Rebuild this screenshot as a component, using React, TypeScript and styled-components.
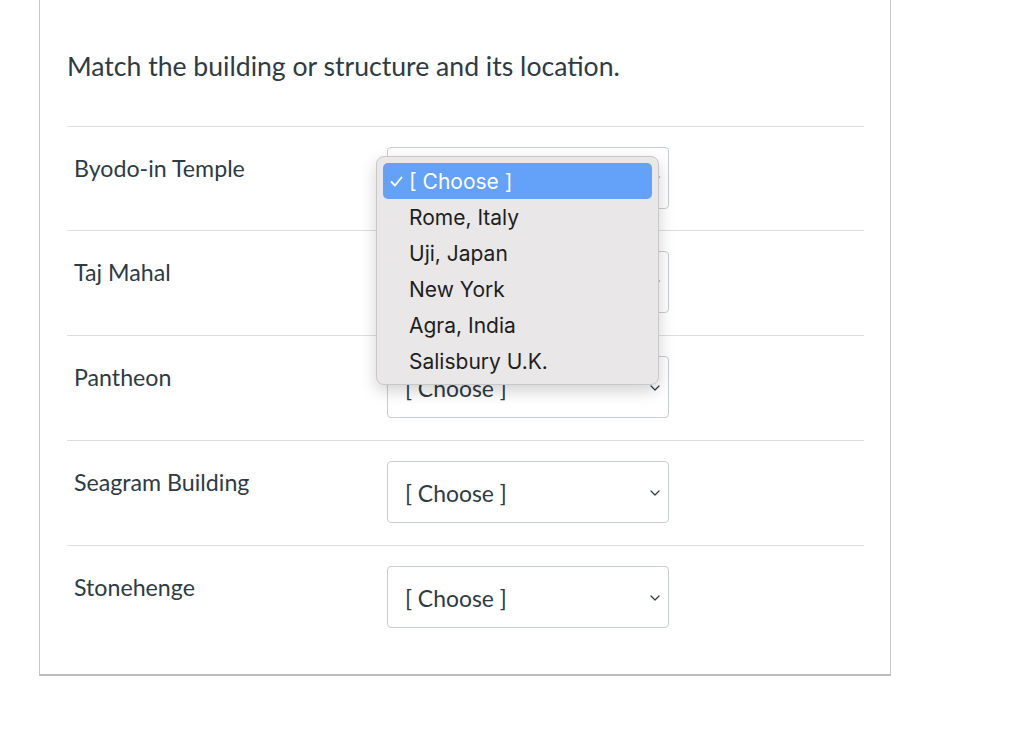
import React from 'react'
import styled, { createGlobalStyle } from 'styled-components'

const GlobalStyle = createGlobalStyle`
  html, body {
    margin: 0;
    padding: 0;
    background: #ffffff;
  }
  body {
    font-family: Lato, "Open Sans", sans-serif;
    color: #2d3b45;
  }
`

const rows = [
  'Byodo-in Temple',
  'Taj Mahal',
  'Pantheon',
  'Seagram Building',
  'Stonehenge',
]

const options = [
  '[ Choose ]',
  'Rome, Italy',
  'Uji, Japan',
  'New York',
  'Agra, India',
  'Salisbury U.K.',
]

const Chevron: React.FC = () => (
  <svg width="10" height="6" viewBox="0 0 10 6" fill="none">
    <polyline points="1,1 5,5 9,1" stroke="#2d3b45" strokeWidth="1.2" strokeLinecap="round" strokeLinejoin="round" />
  </svg>
)

const Check: React.FC = () => (
  <svg width="13" height="11" viewBox="0 0 13 11" fill="none">
    <polyline points="1.5,6 5,9.5 11.5,1.5" stroke="#ffffff" strokeWidth="1.8" strokeLinecap="round" strokeLinejoin="round" />
  </svg>
)

const App: React.FC = () => {
  return (
    <>
      <GlobalStyle />
      <StyledCard>
        <StyledTitle>Match the building or structure and its location.</StyledTitle>
        <StyledList>
          {rows.map((label, i) => (
            <StyledRow key={label}>
              <StyledLabel>{label}</StyledLabel>
              <StyledSelectWrap>
                <StyledSelect>
                  <span>[ Choose ]</span>
                  <StyledChevron>
                    <Chevron />
                  </StyledChevron>
                </StyledSelect>
                {i === 0 && (
                  <StyledMenu>
                    {options.map((opt, j) => (
                      <StyledOption key={opt} selected={j === 0}>
                        <StyledCheckSlot>{j === 0 && <Check />}</StyledCheckSlot>
                        {opt}
                      </StyledOption>
                    ))}
                  </StyledMenu>
                )}
              </StyledSelectWrap>
            </StyledRow>
          ))}
        </StyledList>
      </StyledCard>
    </>
  )
}

const StyledCard = styled.div`
  box-sizing: border-box;
  margin-left: 39px;
  width: 852px;
  padding: 48px 26px 27px 27px;
  border: 1px solid #c7c7c7;
  border-top: none;
  border-bottom: 2px solid #bdbdbd;
`

const StyledTitle = styled.div`
  font-size: 26.6px;
  line-height: 36px;
  color: #2d3b45;
  margin-bottom: 42px;
`

const StyledList = styled.div`
  display: flex;
  flex-direction: column;
`

const StyledRow = styled.div`
  display: flex;
  align-items: flex-start;
  padding: 20px 0 22px 7px;
  border-top: 1px solid #dcdfe1;

  &:first-child {
    padding-bottom: 21px;
  }

  &:last-child {
    padding-bottom: 19px;
  }
`

const StyledLabel = styled.div`
  width: 313px;
  padding-top: 6px;
  font-size: 23.2px;
  line-height: 30px;
  color: #2d3b45;
`

const StyledSelectWrap = styled.div`
  position: relative;
`

const StyledSelect = styled.div`
  box-sizing: border-box;
  width: 282px;
  height: 62px;
  display: flex;
  align-items: center;
  justify-content: space-between;
  padding: 2px 8px 0 17px;
  background: #ffffff;
  border: 1px solid #c7cdd1;
  border-radius: 4px;
  font-size: 22.9px;
  color: #2d3b45;
`

const StyledChevron = styled.span`
  display: flex;
  align-items: center;
`

const StyledMenu = styled.div`
  position: absolute;
  left: -11px;
  top: 9px;
  box-sizing: border-box;
  width: 283px;
  padding: 6px 6px 5px;
  background: #e9e7e8;
  border: 1px solid #c9c7c8;
  border-radius: 8px;
  box-shadow: 0 6px 16px rgba(0, 0, 0, 0.18);
  display: flex;
  flex-direction: column;
  z-index: 10;
`

const StyledOption = styled.div<{ selected?: boolean }>`
  display: flex;
  align-items: center;
  height: 36px;
  padding-left: 7px;
  border-radius: 5px;
  font-family: Inter, "Liberation Sans", sans-serif;
  font-size: 21px;
  color: ${props => (props.selected ? '#ffffff' : '#1e1e1e')};
  background: ${props => (props.selected ? '#64a1f9' : 'transparent')};
`

const StyledCheckSlot = styled.span`
  display: flex;
  align-items: center;
  width: 19px;
`

export default App
